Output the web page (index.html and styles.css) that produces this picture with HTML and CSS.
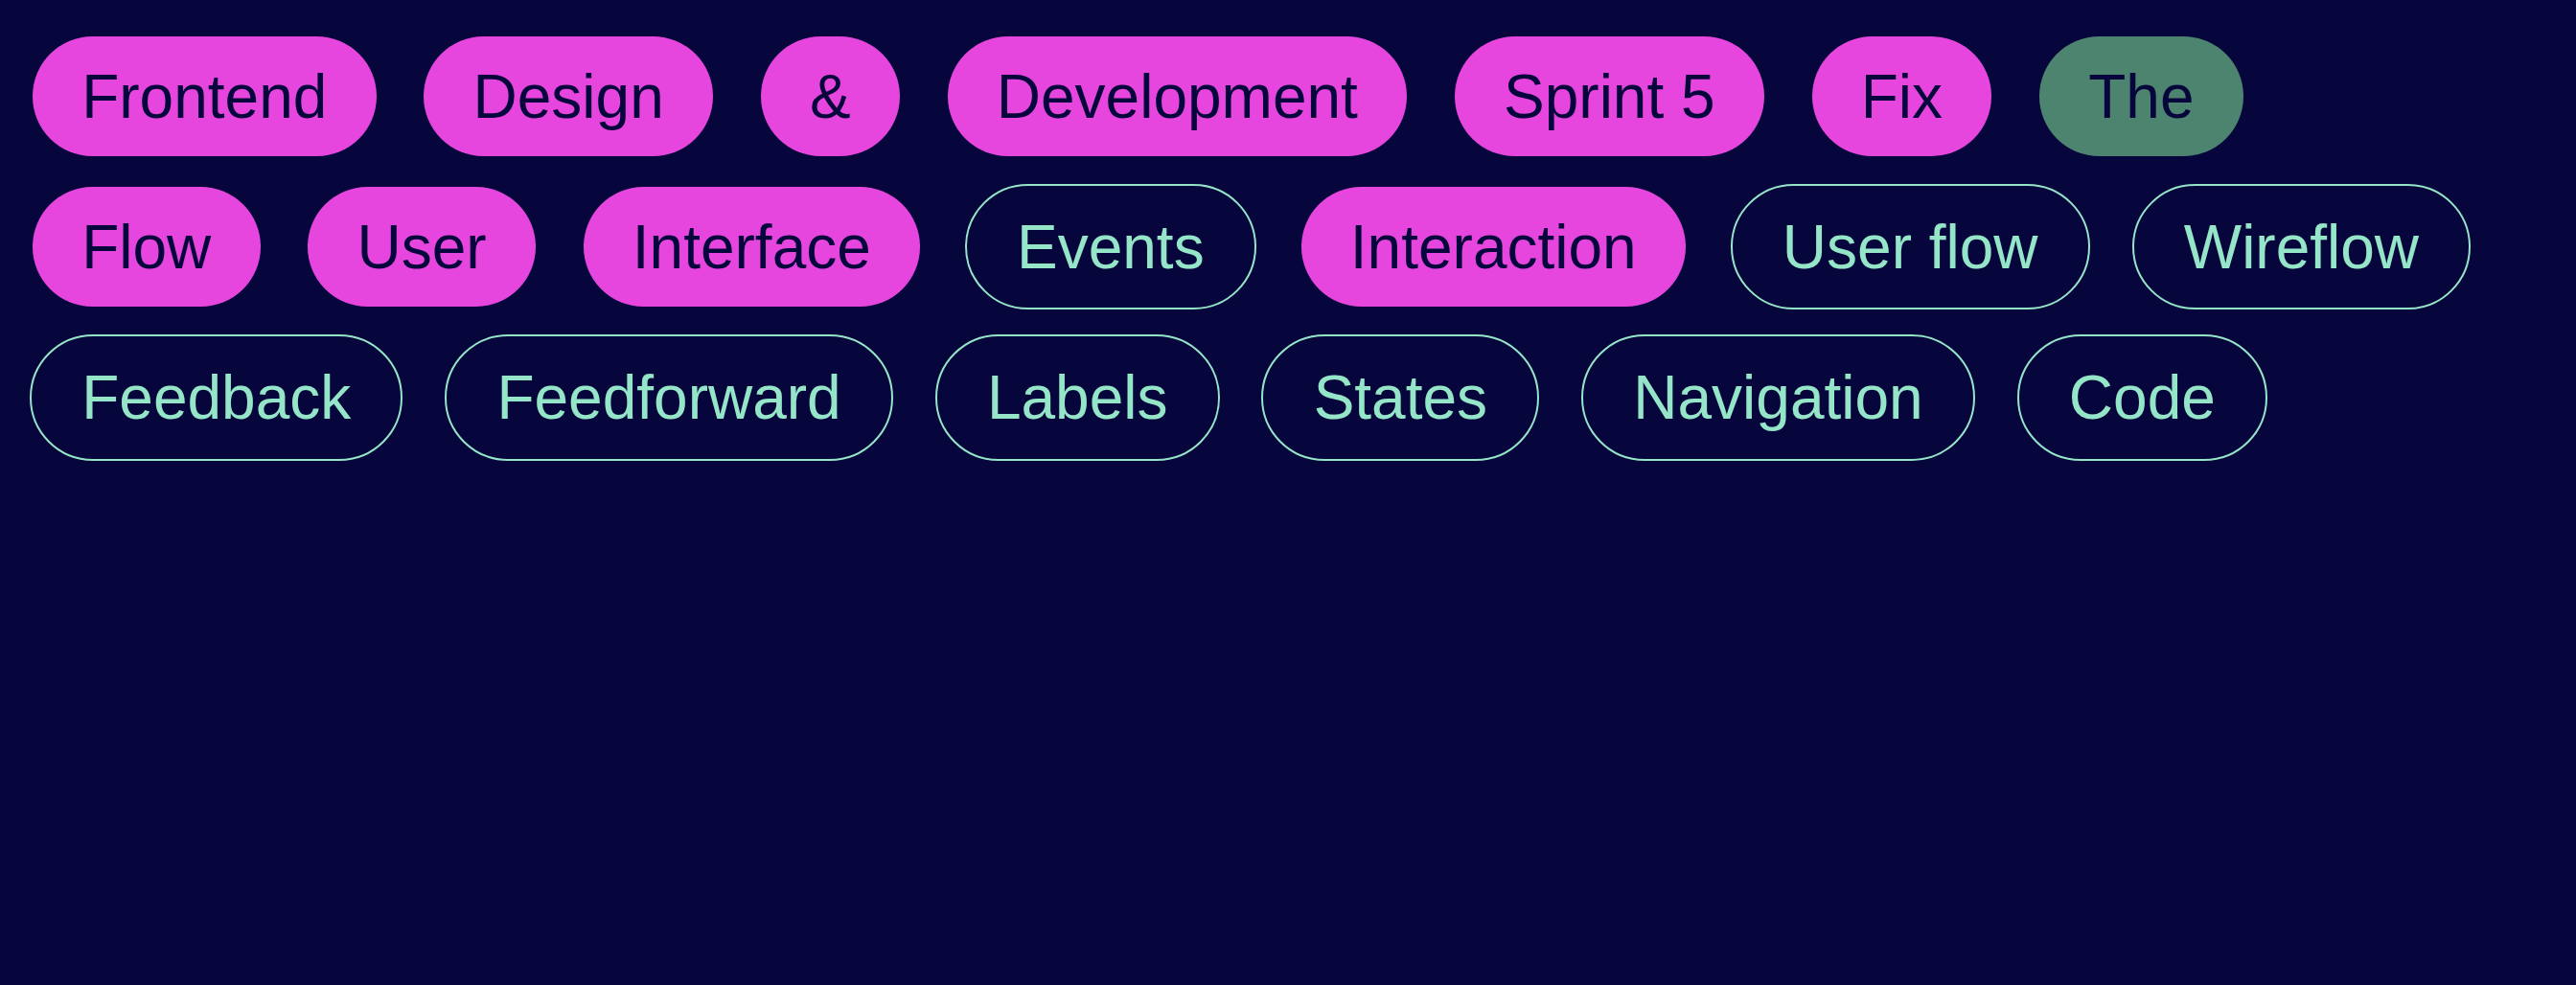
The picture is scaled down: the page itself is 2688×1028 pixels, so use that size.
FILE: index.html
```html
<!DOCTYPE html>
<html lang="en">
<head>
<meta charset="utf-8">
<title>Tags</title>
<link rel="stylesheet" href="styles.css">
</head>
<body>
<ul class="tags">
  <li class="tag tag-title">Frontend</li>
  <li class="tag tag-title">Design</li>
  <li class="tag tag-title">&amp;</li>
  <li class="tag tag-title">Development</li>
  <li class="tag tag-title">Sprint 5</li>
  <li class="tag tag-title">Fix</li>
  <li class="tag tag-hover">The</li>
  <li class="tag tag-title">Flow</li>
  <li class="tag tag-title">User</li>
  <li class="tag tag-title">Interface</li>
  <li class="tag tag-outline">Events</li>
  <li class="tag tag-title">Interaction</li>
  <li class="tag tag-outline">User flow</li>
  <li class="tag tag-outline">Wireflow</li>
  <li class="tag tag-outline">Feedback</li>
  <li class="tag tag-outline">Feedforward</li>
  <li class="tag tag-outline">Labels</li>
  <li class="tag tag-outline">States</li>
  <li class="tag tag-outline">Navigation</li>
  <li class="tag tag-outline">Code</li>
</ul>
</body>
</html>
```
FILE: styles.css
```css
html, body {
  margin: 0;
  padding: 0;
  background: #07063c;
  height: 100%;
}

body {
  font-family: "Liberation Sans", Arial, sans-serif;
  font-size: 64px;
}

.tags {
  list-style: none;
  margin: 0;
  padding: 38px 88px 0 34px;
  display: flex;
  flex-wrap: wrap;
  align-items: flex-start;
  gap: 32px 49.8px;
}

.tag {
  padding: 0.4em 0.8em;
  border-radius: 999px;
  line-height: normal;
  white-space: nowrap;
}

.tag-title {
  background: #e746de;
  color: #07063c;
}

.tag-hover {
  background: #4d8470;
  color: #07063c;
}

.tag-outline {
  color: #95e5c9;
  outline: 2px solid #95e5c9;
  outline-offset: 1px;
}
```
